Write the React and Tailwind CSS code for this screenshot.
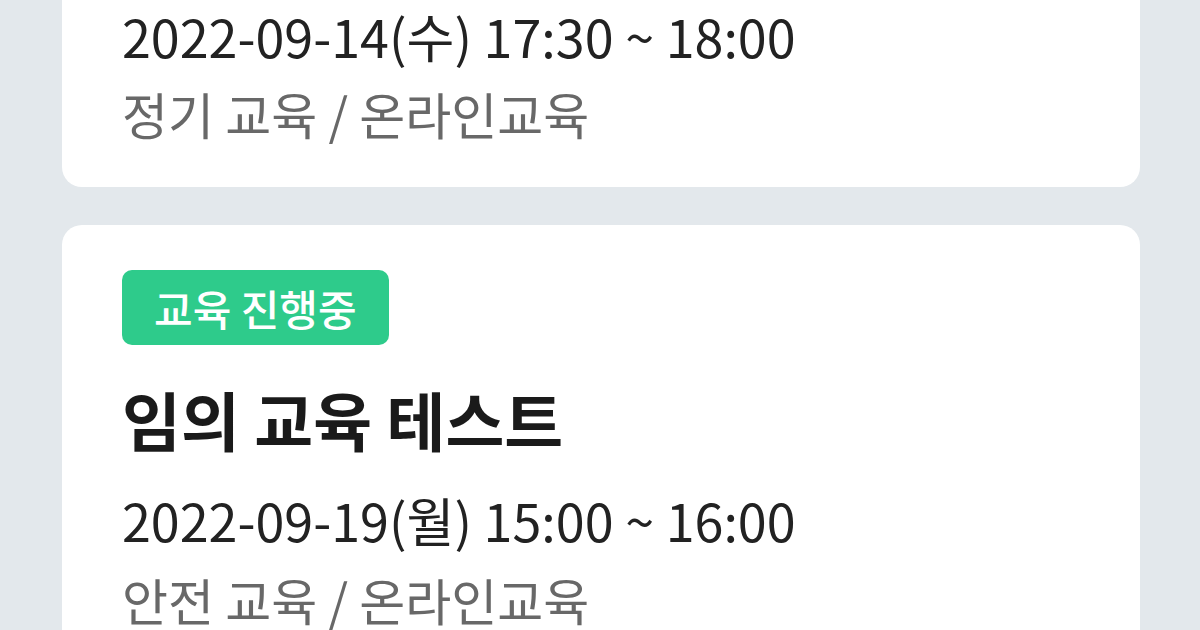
export default function App() {
    const font = { fontFamily: '"Noto Sans CJK KR", "Noto Sans", sans-serif' };
    return (
        <div className="w-[1200px] h-[630px] overflow-hidden bg-[#e3e8ec]" style={font}>
            <div className="flex flex-col gap-[38px] pl-[62px] pr-[60px]">
                <div className="-mt-[30px] rounded-[20px] bg-white px-[60px] pt-[30px] pb-[41px]">
                    <div className="text-[52px] leading-[72px] text-[#222222] whitespace-nowrap">2022-09-14(수) 17:30 ~ 18:00</div>
                    <div className="mt-[8px] text-[50px] leading-[66px] text-[#686868] whitespace-nowrap">정기 교육 / 온라인교육</div>
                </div>
                <div className="rounded-[20px] bg-white px-[60px] pt-[45px] pb-[40px]">
                    <div className="flex">
                        <span className="flex h-[75px] items-center rounded-[10px] bg-[#2ecb8b] px-[32px] text-[42px] font-medium text-white whitespace-nowrap">교육 진행중</span>
                    </div>
                    <div className="mt-[31px] text-[64px] font-bold leading-[84px] text-[#1a1a1a] whitespace-nowrap">임의 교육 테스트</div>
                    <div className="mt-[24px] text-[52px] leading-[72px] text-[#222222] whitespace-nowrap">2022-09-19(월) 15:00 ~ 16:00</div>
                    <div className="mt-[10px] text-[50px] leading-[66px] text-[#686868] whitespace-nowrap">안전 교육 / 온라인교육</div>
                </div>
            </div>
        </div>
    );
}
